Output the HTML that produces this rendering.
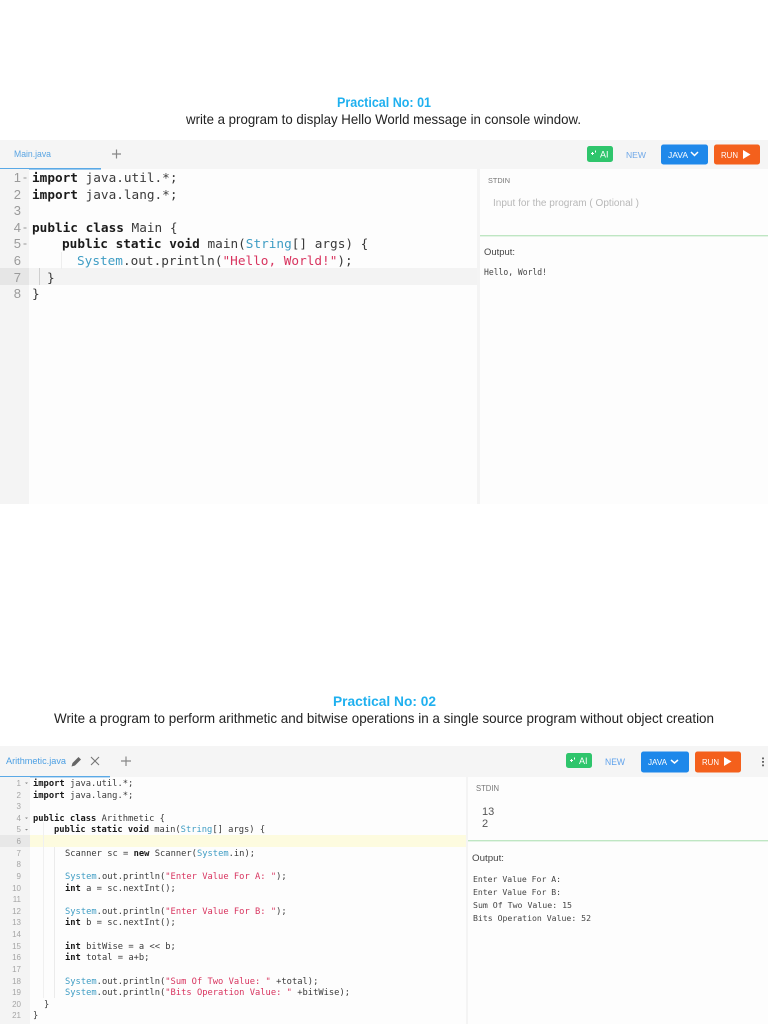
<!DOCTYPE html>
<html>
<head>
<meta charset="utf-8">
<style>
html,body{margin:0;padding:0;background:#fff;width:768px;height:1024px;overflow:hidden}
svg{display:block;filter:blur(.35px)}
text{white-space:pre}
.s{font-family:"Liberation Sans",sans-serif}
.t{font-family:"DejaVu Sans Mono","Liberation Mono",monospace;font-size:12.72px;fill:#3a3a3a}
.b{font-family:"DejaVu Sans Mono","Liberation Mono",monospace;font-size:8.77px;fill:#3a3a3a}
.k{font-weight:700;fill:#1a1a1a}
.c{fill:#3f9dc4}
.r{fill:#d8345f}
.n{font-family:"Liberation Sans",sans-serif;font-size:13px;fill:#9a9a9a}
.m{font-family:"Liberation Sans",sans-serif;font-size:8px;fill:#a5a5a5}
.o{font-family:"DejaVu Sans Mono","Liberation Mono",monospace;fill:#444}
</style>
</head>
<body>
<svg width="768" height="1024" viewBox="0 0 768 1024" xmlns="http://www.w3.org/2000/svg">
<rect width="768" height="1024" fill="#fff"/>

<!-- Practical 1 -->
<text class="s" x="337" y="107" font-size="13.5" font-weight="700" fill="#1fb0ef" textLength="94" lengthAdjust="spacingAndGlyphs">Practical No: 01</text>
<text class="s" x="186" y="124" font-size="14" fill="#222" textLength="395" lengthAdjust="spacingAndGlyphs">write a program to display Hello World message in console window.</text>

<rect x="0" y="169" width="768" height="335" fill="#fdfdfd"/>
<rect x="0" y="140" width="768" height="29" fill="#f5f5f5"/>
<rect x="0" y="168" width="101" height="1.6" fill="#5aa9e6"/>
<rect x="0" y="169" width="29" height="335" fill="#f4f4f4"/>
<rect x="29" y="268" width="448" height="17" fill="#f3f3f3"/>
<rect x="0" y="268" width="29" height="17" fill="#e6e6e6"/>
<rect x="477" y="169" width="3" height="335" fill="#f4f4f4"/>
<rect x="480" y="235" width="288" height="1.4" fill="#bfe6c3"/>
<text class="s" x="14" y="157" font-size="9" fill="#5aa5e3" textLength="37" lengthAdjust="spacingAndGlyphs">Main.java</text>
<path d="M116.500 149.500v9M112 154h9" stroke="#888" stroke-width="1.200" fill="none"/>

<rect x="39" y="268" width="1" height="17" fill="#cfcfcf"/>
<rect x="61" y="252" width="1" height="17" fill="#eeeeee"/>

<g text-anchor="end">
<text class="n" x="21" y="182">1</text><text class="n" x="21" y="199">2</text><text class="n" x="21" y="215">3</text><text class="n" x="21" y="232">4</text><text class="n" x="21" y="248">5</text><text class="n" x="21" y="265">6</text><text class="n" x="21" y="282">7</text><text class="n" x="21" y="298">8</text>
</g>
<path d="M23.500 178h3M23.500 228h3M23.500 244h3" stroke="#999" stroke-width="1"/>

<text class="t" x="32" y="182"><tspan class="k">import</tspan> java.util.*;</text>
<text class="t" x="32" y="199"><tspan class="k">import</tspan> java.lang.*;</text>
<text class="t" x="32" y="232"><tspan class="k">public class</tspan> Main {</text>
<text class="t" x="62" y="248"><tspan class="k">public static void</tspan> main(<tspan class="c">String</tspan>[] args) {</text>
<text class="t" x="77" y="265"><tspan class="c">System</tspan>.out.println(<tspan class="r">"Hello, World!"</tspan>);</text>
<text class="t" x="47" y="282">}</text>
<text class="t" x="32" y="298">}</text>

<!-- toolbar 1 -->
<rect x="587" y="146" width="26" height="16" rx="2.500" fill="#2fc56c"/>
<text class="s" x="600" y="157.500" font-size="9" fill="#fff">AI</text>
<path d="M591 153.500h3M592.500 152v3M595.500 150.500v2" stroke="#fff" stroke-width="1"/>
<text class="s" x="626" y="158" font-size="8.500" fill="#6fa8e8" textLength="20" lengthAdjust="spacingAndGlyphs">NEW</text>
<rect x="661" y="144.500" width="47" height="20" rx="2.500" fill="#1e88ea"/>
<text class="s" x="668" y="158" font-size="8.500" fill="#fff" textLength="20" lengthAdjust="spacingAndGlyphs">JAVA</text>
<path d="M691 152l3.500 3.500 3.500-3.500" stroke="#fff" stroke-width="1.500" fill="none"/>
<rect x="714" y="144.500" width="46" height="20" rx="2.500" fill="#f4601c"/>
<text class="s" x="721" y="158" font-size="8.500" fill="#fff" textLength="17" lengthAdjust="spacingAndGlyphs">RUN</text>
<path d="M743 150v9l7.500-4.500z" fill="#fff"/>

<text class="s" x="488" y="183" font-size="7.500" fill="#777" textLength="22" lengthAdjust="spacingAndGlyphs">STDIN</text>
<text class="s" x="493" y="206" font-size="10" fill="#b8b8b8" textLength="146" lengthAdjust="spacingAndGlyphs">Input for the program ( Optional )</text>
<text class="s" x="484" y="255" font-size="9.500" fill="#444" textLength="31" lengthAdjust="spacingAndGlyphs">Output:</text>
<text class="o" x="484" y="275" font-size="8.900" textLength="63" lengthAdjust="spacingAndGlyphs">Hello, World!</text>

<!-- Practical 2 -->
<text class="s" x="333" y="706" font-size="14" font-weight="700" fill="#1fb0ef" textLength="103" lengthAdjust="spacingAndGlyphs">Practical No: 02</text>
<text class="s" x="54" y="723" font-size="14" fill="#222" textLength="660" lengthAdjust="spacingAndGlyphs">Write a program to perform arithmetic and bitwise operations in a single source program without object creation</text>

<rect x="0" y="777" width="768" height="247" fill="#fdfdfd"/>
<rect x="0" y="746" width="768" height="31" fill="#f5f5f5"/>
<rect x="0" y="776" width="110" height="1.400" fill="#5aa9e6"/>
<rect x="0" y="777" width="30" height="247" fill="#f4f4f4"/>
<rect x="30" y="835" width="436" height="12" fill="#fdfbdf"/>
<rect x="0" y="835" width="30" height="12" fill="#e8e8e8"/>
<rect x="466" y="777" width="2" height="247" fill="#f4f4f4"/>
<rect x="468" y="840" width="300" height="1.400" fill="#bfe6c3"/>
<text class="s" x="6" y="764" font-size="9" fill="#4b9fe3" textLength="60" lengthAdjust="spacingAndGlyphs">Arithmetic.java</text>
<path d="M71.500 766.500l1-3.500 6-6 2.500 2.500-6 6z" fill="#666"/>
<path d="M91 757l8 8M99 757l-8 8" stroke="#777" stroke-width="1.100"/>
<path d="M126 756.500v9.500M121 761h10" stroke="#888" stroke-width="1.200" fill="none"/>

<rect x="43" y="822" width="1" height="176" fill="#f0f0f0"/>
<rect x="54" y="847" width="1" height="151" fill="#ebebeb"/>

<g text-anchor="end" class="m">
<text class="m" x="21" y="786">1</text><text class="m" x="21" y="798">2</text><text class="m" x="21" y="809">3</text><text class="m" x="21" y="821">4</text><text class="m" x="21" y="832">5</text><text class="m" x="21" y="844">6</text><text class="m" x="21" y="856">7</text><text class="m" x="21" y="867">8</text><text class="m" x="21" y="879">9</text><text class="m" x="21" y="891">10</text><text class="m" x="21" y="902">11</text><text class="m" x="21" y="914">12</text><text class="m" x="21" y="925">13</text><text class="m" x="21" y="937">14</text><text class="m" x="21" y="949">15</text><text class="m" x="21" y="960">16</text><text class="m" x="21" y="972">17</text><text class="m" x="21" y="984">18</text><text class="m" x="21" y="995">19</text><text class="m" x="21" y="1007">20</text><text class="m" x="21" y="1018">21</text>
</g>
<path d="M25 782.500l1.500 1.500 1.500-1.500zM25 817.500l1.500 1.500 1.500-1.500zM25 829l1.500 1.500 1.500-1.500z" fill="#888"/>

<text class="b" x="33" y="786"><tspan class="k">import</tspan> java.util.*;</text>
<text class="b" x="33" y="798"><tspan class="k">import</tspan> java.lang.*;</text>
<text class="b" x="33" y="821"><tspan class="k">public class</tspan> Arithmetic {</text>
<text class="b" x="54" y="832"><tspan class="k">public static void</tspan> main(<tspan class="c">String</tspan>[] args) {</text>
<text class="b" x="65" y="856">Scanner sc = <tspan class="k">new</tspan> Scanner(<tspan class="c">System</tspan>.in);</text>
<text class="b" x="65" y="879"><tspan class="c">System</tspan>.out.println(<tspan class="r">"Enter Value For A: "</tspan>);</text>
<text class="b" x="65" y="891"><tspan class="k">int</tspan> a = sc.nextInt();</text>
<text class="b" x="65" y="914"><tspan class="c">System</tspan>.out.println(<tspan class="r">"Enter Value For B: "</tspan>);</text>
<text class="b" x="65" y="925"><tspan class="k">int</tspan> b = sc.nextInt();</text>
<text class="b" x="65" y="949"><tspan class="k">int</tspan> bitWise = a &lt;&lt; b;</text>
<text class="b" x="65" y="960"><tspan class="k">int</tspan> total = a+b;</text>
<text class="b" x="65" y="984"><tspan class="c">System</tspan>.out.println(<tspan class="r">"Sum Of Two Value: "</tspan> +total);</text>
<text class="b" x="65" y="995"><tspan class="c">System</tspan>.out.println(<tspan class="r">"Bits Operation Value: "</tspan> +bitWise);</text>
<text class="b" x="44" y="1007">}</text>
<text class="b" x="33" y="1018">}</text>

<!-- toolbar 2 -->
<rect x="566" y="753" width="26" height="15" rx="2.500" fill="#2fc56c"/>
<text class="s" x="579" y="764" font-size="9" fill="#fff">AI</text>
<path d="M570 760.500h3M571.500 759v3M574.500 757.500v2" stroke="#fff" stroke-width="1"/>
<text class="s" x="605" y="765" font-size="9" fill="#5fa2ec" textLength="20" lengthAdjust="spacingAndGlyphs">NEW</text>
<rect x="641" y="751.500" width="48" height="21" rx="2.500" fill="#1e88ea"/>
<text class="s" x="648" y="765" font-size="8.500" fill="#fff" textLength="19" lengthAdjust="spacingAndGlyphs">JAVA</text>
<path d="M671 760l3.500 3 3.500-3" stroke="#fff" stroke-width="1.500" fill="none"/>
<rect x="695" y="751.500" width="46" height="21" rx="2.500" fill="#f4601c"/>
<text class="s" x="702" y="765" font-size="8.500" fill="#fff" textLength="17" lengthAdjust="spacingAndGlyphs">RUN</text>
<path d="M724 757v9l7.500-4.500z" fill="#fff"/>
<path d="M763 757.500v1.800M763 761v1.800M763 764.500v1.800" stroke="#666" stroke-width="2"/>

<text class="s" x="476" y="791" font-size="8" fill="#777" textLength="23" lengthAdjust="spacingAndGlyphs">STDIN</text>
<text class="s" x="482" y="815" font-size="11" fill="#555">13</text>
<text class="s" x="482" y="827" font-size="11" fill="#555">2</text>
<text class="s" x="472" y="861" font-size="9.500" fill="#444" textLength="32" lengthAdjust="spacingAndGlyphs">Output:</text>
<text class="o" x="473" y="882" font-size="8.200" textLength="88" lengthAdjust="spacingAndGlyphs">Enter Value For A:</text>
<text class="o" x="473" y="895" font-size="8.200" textLength="88" lengthAdjust="spacingAndGlyphs">Enter Value For B:</text>
<text class="o" x="473" y="908" font-size="8.200" textLength="99" lengthAdjust="spacingAndGlyphs">Sum Of Two Value: 15</text>
<text class="o" x="473" y="921" font-size="8.200" textLength="118" lengthAdjust="spacingAndGlyphs">Bits Operation Value: 52</text>
</svg>
</body>
</html>
